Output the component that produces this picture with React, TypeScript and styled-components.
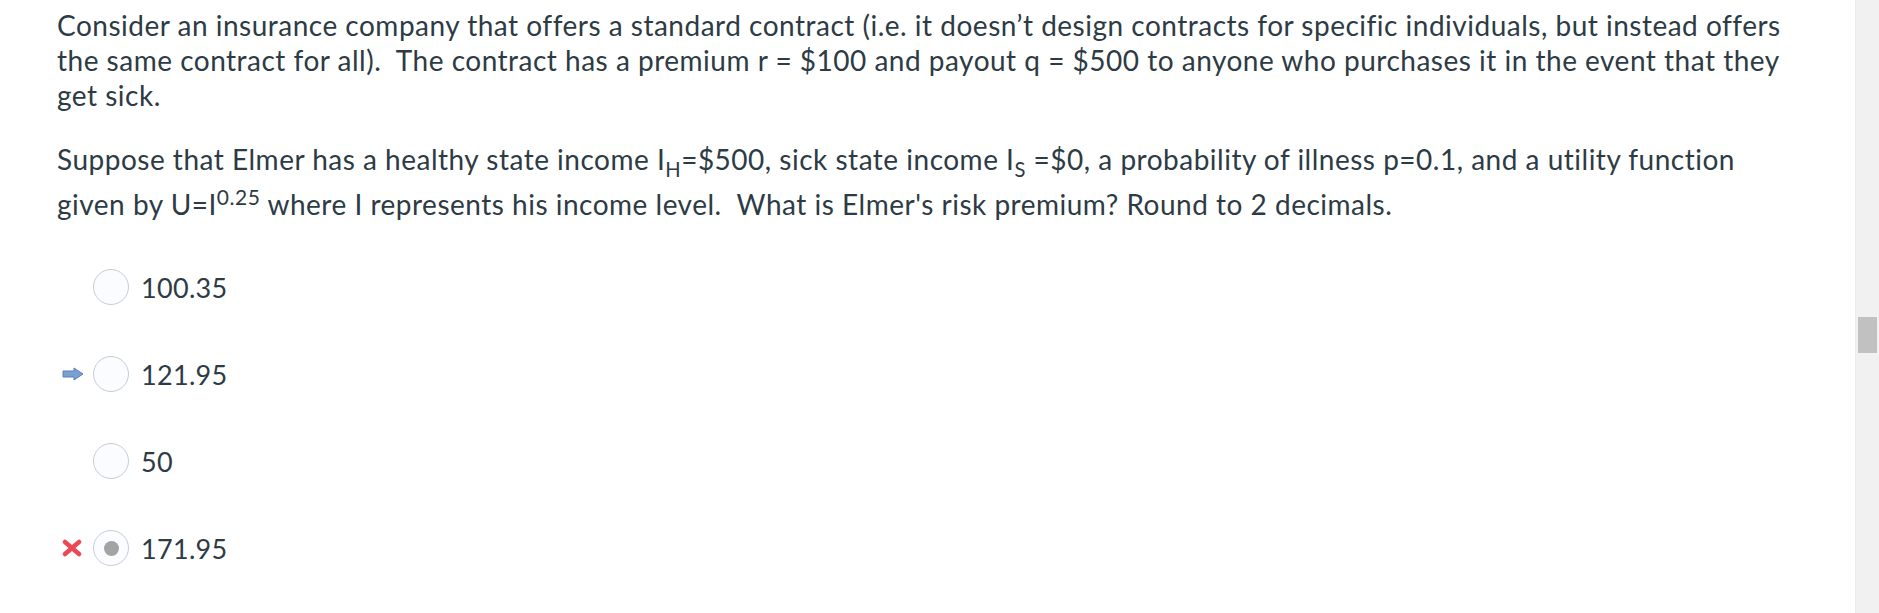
import React from 'react';
import styled, { createGlobalStyle } from 'styled-components';

const GlobalStyle = createGlobalStyle`
    html, body {
        margin: 0;
        padding: 0;
        background: #fff;
    }
    body {
        font-family: Lato, "Open Sans", sans-serif;
        color: #2d3b45;
    }
`;

const Page = styled.div`
    display: flex;
    height: 613px;
    overflow: hidden;
`;

const Content = styled.main`
    flex: 1;
    padding: 8px 0 0 57px;
`;

const Question = styled.div`
    font-size: 28px;
    letter-spacing: 0.5px;
    line-height: 35px;
    white-space: nowrap;
`;

const Para = styled.p`
    margin: 0 0 29px;
`;

const Sub = styled.sub`
    font-size: 0.72em;
    line-height: 0;
`;

const Sup = styled.sup`
    font-size: 0.75em;
    line-height: 1.9;
`;

const Answers = styled.ul`
    list-style: none;
    margin: 0;
    padding: 18px 0 0;
    display: flex;
    flex-direction: column;
    gap: 51px;
`;

const Answer = styled.li`
    display: flex;
    align-items: center;
    height: 36px;
    margin-left: 5px;
`;

const Marker = styled.span`
    width: 31px;
    display: flex;
    align-items: center;
`;

const Radio = styled.span<{ $checked?: boolean }>`
    width: 34px;
    height: 34px;
    border-radius: 50%;
    border: 1px solid #c7cdd1;
    background: #fafcff;
    display: flex;
    align-items: center;
    justify-content: center;
    margin-right: 12px;
    &::after {
        content: '';
        display: ${(p) => (p.$checked ? 'block' : 'none')};
        width: 15px;
        height: 15px;
        border-radius: 50%;
        background: #a3a3a3;
    }
`;

const Label = styled.span`
    font-size: 27px;
    letter-spacing: 0.3px;
`;

const Track = styled.div`
    width: 24px;
    background: #f1f1f1;
    border-left: 1px solid #ebebeb;
    box-sizing: border-box;
    padding: 317px 2px 0;
`;

const Thumb = styled.div`
    height: 36px;
    background: #c1c1c1;
`;

function Arrow() {
    return (
        <svg width="22" height="14" viewBox="0 0 22 14">
            <path
                d="M1 4 H12 V1 L21 7 L12 13 V10 H1 Z"
                fill="#7c9fd3"
                stroke="#5a7fb8"
                strokeWidth="1"
                strokeLinejoin="round"
            />
        </svg>
    );
}

function Cross() {
    return (
        <svg width="20" height="18" viewBox="0 0 20 18">
            <path
                d="M3 3 L17 15 M17 3 L3 15"
                stroke="#ea4a55"
                strokeWidth="4.5"
                strokeLinecap="round"
            />
        </svg>
    );
}

interface Choice {
    label: string;
    mark?: 'arrow' | 'cross';
    checked?: boolean;
}

const choices: Choice[] = [
    { label: '100.35' },
    { label: '121.95', mark: 'arrow' },
    { label: '50' },
    { label: '171.95', mark: 'cross', checked: true }
];

export default function App() {
    return (
        <Page>
            <GlobalStyle />
            <Content>
                <Question>
                    <Para>
                        Consider an insurance company that offers a standard contract (i.e. it doesn’t design
                        contracts for specific individuals, but instead offers
                        <br />
                        the same contract for all).&nbsp; The contract has a premium r = $100 and payout q = $500 to
                        anyone who purchases it in the event that they
                        <br />
                        get sick.
                    </Para>
                    <Para>
                        Suppose that Elmer has a healthy state income I<Sub>H</Sub>=$500, sick state income I
                        <Sub>S</Sub> =$0, a probability of illness p=0.1, and a utility function
                        <br />
                        given by U=I<Sup>0.25</Sup> where I represents his income level.&nbsp; What is Elmer's risk
                        premium? Round to 2 decimals.
                    </Para>
                </Question>
                <Answers>
                    {choices.map((c) => (
                        <Answer key={c.label}>
                            <Marker>
                                {c.mark === 'arrow' && <Arrow />}
                                {c.mark === 'cross' && <Cross />}
                            </Marker>
                            <Radio $checked={c.checked} />
                            <Label>{c.label}</Label>
                        </Answer>
                    ))}
                </Answers>
            </Content>
            <Track>
                <Thumb />
            </Track>
        </Page>
    );
}
